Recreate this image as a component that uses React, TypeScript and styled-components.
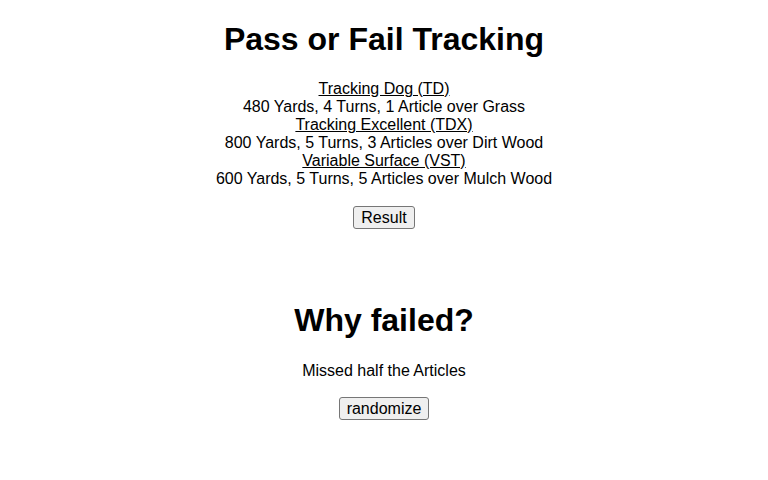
import React from 'react'
import styled, { createGlobalStyle } from 'styled-components'

const GlobalStyle = createGlobalStyle`
  body {
    margin: 0;
    background: #ffffff;
    color: #000000;
    font-family: "Liberation Sans", Arial, sans-serif;
  }
`

const Section = styled.section<{ gap?: number }>`
  text-align: center;
  margin-top: ${({ gap }) => gap || 0}px;
`

const Title = styled.h1`
  font-size: 32px;
  font-weight: bold;
  margin: 0.67em 0;
`

const Levels = styled.div`
  margin: 16px 0 18px;
  font-size: 16px;
  line-height: 18px;
`

const LevelName = styled.u`
  display: block;
`

const LevelInfo = styled.div``

const Reason = styled.p`
  margin: 23px 0 17px;
  font-size: 16px;
  line-height: 18px;
`

const Button = styled.button`
  font-family: "Liberation Sans", Arial, sans-serif;
  font-size: 16px;
  line-height: 17px;
  padding: 2px 7px;
  color: #000000;
  background: #efefef;
  border: 1px solid #767676;
  border-radius: 3px;
  vertical-align: top;
`

const levels = [
  { name: 'Tracking Dog (TD)', info: '480 Yards, 4 Turns, 1 Article over Grass' },
  { name: 'Tracking Excellent (TDX)', info: '800 Yards, 5 Turns, 3 Articles over Dirt Wood' },
  { name: 'Variable Surface (VST)', info: '600 Yards, 5 Turns, 5 Articles over Mulch Wood' },
]

const App: React.FC = () => {
  return (
    <>
      <GlobalStyle />
      <Section>
        <Title>Pass or Fail Tracking</Title>
        <Levels>
          {levels.map((level, index) => (
            <React.Fragment key={index}>
              <LevelName>{level.name}</LevelName>
              <LevelInfo>{level.info}</LevelInfo>
            </React.Fragment>
          ))}
        </Levels>
        <Button>Result</Button>
      </Section>
      <Section gap={73}>
        <Title>Why failed?</Title>
        <Reason>Missed half the Articles</Reason>
        <Button>randomize</Button>
      </Section>
    </>
  )
}

export default App
